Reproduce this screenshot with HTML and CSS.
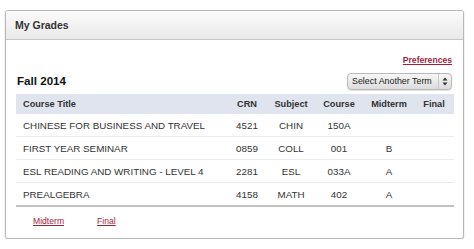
FILE: index.html
```html
<!DOCTYPE html>
<html>
<head>
<meta charset="utf-8">
<link rel="stylesheet" href="styles.css">
</head>
<body>
<div class="panel">
  <div class="panel-head">My Grades</div>
  <div class="panel-body">
    <div class="prefs"><a href="#" class="prefs-link">Preferences</a></div>
    <div class="term-row">
      <h2 class="term">Fall 2014</h2>
      <div class="select">
        <span class="select-text">Select Another Term</span>
        <span class="select-arrows">
          <svg width="6" height="9" viewBox="0 0 6 9"><path d="M3 0.5 L5.5 3.5 L0.5 3.5 Z M3 8.5 L5.5 5.5 L0.5 5.5 Z" fill="#333"/></svg>
        </span>
      </div>
    </div>
    <table class="grades">
      <colgroup>
        <col class="c-title"><col class="c-crn"><col class="c-subj"><col class="c-course"><col class="c-mid"><col class="c-final">
      </colgroup>
      <thead>
        <tr><th class="left">Course Title</th><th>CRN</th><th>Subject</th><th>Course</th><th>Midterm</th><th>Final</th></tr>
      </thead>
      <tbody>
        <tr><td class="left">CHINESE FOR BUSINESS AND TRAVEL</td><td>4521</td><td>CHIN</td><td>150A</td><td></td><td></td></tr>
        <tr><td class="left">FIRST YEAR SEMINAR</td><td>0859</td><td>COLL</td><td>001</td><td>B</td><td></td></tr>
        <tr><td class="left">ESL READING AND WRITING - LEVEL 4</td><td>2281</td><td>ESL</td><td>033A</td><td>A</td><td></td></tr>
        <tr class="last"><td class="left">PREALGEBRA</td><td>4158</td><td>MATH</td><td>402</td><td>A</td><td></td></tr>
      </tbody>
    </table>
    <div class="links">
      <a href="#" class="foot-link">Midterm</a>
      <a href="#" class="foot-link">Final</a>
    </div>
  </div>
</div>
</body>
</html>
```
FILE: styles.css
```css
html, body {
  margin: 0;
  padding: 0;
  background: #fff;
  font-family: "Liberation Sans", Arial, sans-serif;
  color: #333;
}
.panel {
  margin: 10px 0 0 5px;
  width: 457px;
  height: 227px;
  border: 1px solid #b8b8b8;
  border-radius: 3px;
  box-shadow: 0 1px 2px rgba(0,0,0,0.18);
  background: #fff;
  overflow: hidden;
}
.panel-head {
  height: 28px;
  line-height: 28px;
  padding-left: 9px;
  font-size: 10.5px;
  font-weight: bold;
  color: #333;
  background: linear-gradient(#fbfbfb, #e9e9e9);
  border-bottom: 1px solid #c6c6c6;
}
.panel-body {
  padding: 14px 10px 0 10px;
}
.prefs {
  display: flex;
  justify-content: flex-end;
  height: 12px;
  line-height: 12px;
  padding-right: 1px;
}
.prefs-link {
  font-size: 8.6px;
  font-weight: bold;
  color: #a21f3c;
  text-decoration: underline;
}
.term-row {
  margin-top: 6px;
  height: 18px;
  display: flex;
  justify-content: space-between;
  align-items: center;
}
.term {
  margin: 0 0 0 1px;
  font-size: 11.6px;
  font-weight: bold;
  color: #111;
  line-height: 18px;
}
.select {
  width: 103px;
  height: 15px;
  margin-right: 1px;
  border: 1px solid #b9b9b9;
  border-radius: 4px;
  background: linear-gradient(#f7f7f7, #dcdcdc);
  box-shadow: 0 1px 1px rgba(0,0,0,0.12);
  display: flex;
  align-items: center;
  font-size: 8.9px;
  color: #222;
}
.select-text {
  flex: 1;
  padding-left: 4px;
  line-height: 15px;
  white-space: nowrap;
  overflow: hidden;
}
.select-arrows {
  flex: 0 0 12px;
  height: 15px;
  border-left: 1px solid #c8c8c8;
  display: flex;
  align-items: center;
  justify-content: center;
}
.grades {
  margin-top: 4px;
  width: 438px;
  table-layout: fixed;
  border-collapse: collapse;
}
.c-title { width: 210px; }
.c-crn { width: 42px; }
.c-subj { width: 46px; }
.c-course { width: 50px; }
.c-mid { width: 50px; }
.c-final { width: 40px; }
.grades th {
  height: 20px;
  padding: 0;
  background: #dfe4ee;
  font-size: 9.2px;
  font-weight: bold;
  color: #333;
  text-align: center;
}
.grades td {
  height: 22px;
  padding: 0;
  font-size: 9.8px;
  color: #333;
  text-align: center;
  border-bottom: 1px solid #ececec;
  white-space: nowrap;
}
.grades .left {
  text-align: left;
  padding-left: 7px;
}
.grades tr.last td {
  border-bottom: 2px solid #c2c2c2;
}
.links {
  display: flex;
  gap: 33px;
  padding-left: 17px;
  margin-top: 8px;
  line-height: 12px;
}
.foot-link {
  font-size: 8.6px;
  color: #a21f3c;
  text-decoration: underline;
}
```
